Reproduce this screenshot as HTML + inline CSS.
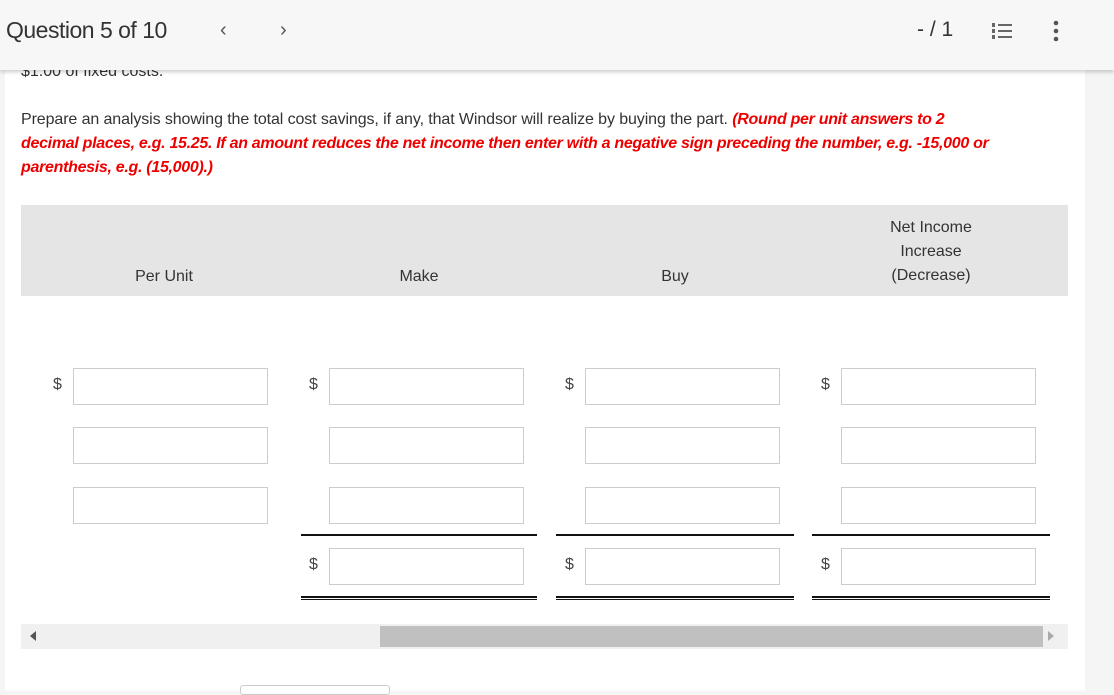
<!DOCTYPE html>
<html><head><style>
*{margin:0;padding:0;box-sizing:border-box}
body{width:1114px;height:691px;overflow:hidden;background:#f5f5f5;font-family:"Liberation Sans",sans-serif;color:#333;position:relative}
.content{position:absolute;left:5px;top:0;width:1080px;height:691px;background:#fff}
.hdr{position:absolute;left:0;top:0;width:1114px;height:70px;background:#f7f7f7;box-shadow:0 2px 4px rgba(0,0,0,.2);z-index:2}
.a{position:absolute}
.in{position:absolute;width:195px;height:37px;border:1px solid #ccc;background:#fff}
.d{position:absolute;font-size:16px;color:#444}
.l1{position:absolute;height:1px;border-top:2px solid #111}
.l2{position:absolute;height:4px;border-top:2px solid #111;border-bottom:1.5px solid #111}
.th{position:absolute;font-size:16px;color:#333;text-align:center;width:200px;line-height:24px}
.red{color:#e00;font-weight:bold;font-style:italic;letter-spacing:-0.3px}
</style></head><body>
<div class="content"></div>
<div class="hdr">
 <div class="a" style="left:6px;top:17px;font-size:23px;color:#333;letter-spacing:-0.5px">Question 5 of 10</div>
 <div class="a" style="left:220px;top:19px;font-size:20px;color:#555">&lsaquo;</div>
 <div class="a" style="left:280px;top:19px;font-size:20px;color:#555">&rsaquo;</div>
 <div class="a" style="left:917px;top:18px;font-size:21px;color:#333">- / 1</div>
 <svg class="a" style="left:990px;top:22px" width="24" height="20"><g stroke="#666" stroke-width="2"><line x1="8" y1="3" x2="22" y2="3"/><line x1="8" y1="9" x2="22" y2="9"/><line x1="8" y1="15" x2="22" y2="15"/></g><g fill="#666"><rect x="2" y="1" width="3" height="4"/><rect x="2" y="7" width="3" height="4"/><rect x="2" y="13" width="3" height="4"/></g></svg>
 <svg class="a" style="left:1052px;top:20px" width="8" height="24"><circle cx="4" cy="3" r="2.3" fill="#555"/><circle cx="4" cy="11" r="2.3" fill="#555"/><circle cx="4" cy="19" r="2.3" fill="#555"/></svg>
</div>
<div class="a" style="left:21px;top:63px;font-size:16px;color:#333">$1.00 of fixed costs.</div>
<div class="a" style="left:21px;top:108px;width:1060px;font-size:16px;line-height:24px;color:#333;letter-spacing:-0.1px;white-space:nowrap">Prepare an analysis showing the total cost savings, if any, that Windsor will realize by buying the part. <span class="red">(Round per unit answers to 2</span><br><span class="red">decimal places, e.g. 15.25. If an amount reduces the net income then enter with a negative sign preceding the number, e.g. -15,000 or</span><br><span class="red">parenthesis, e.g. (15,000).)</span></div>
<div class="a" style="left:21px;top:205px;width:1047px;height:91px;background:#e5e5e5"></div>
<div class="th" style="left:64px;top:265px">Per Unit</div>
<div class="th" style="left:319px;top:265px">Make</div>
<div class="th" style="left:575px;top:265px">Buy</div>
<div class="th" style="left:831px;top:216px">Net Income<br>Increase<br>(Decrease)</div>

<div class="d" style="left:53px;top:376px">$</div><div class="in" style="left:73px;top:368px"></div>
<div class="d" style="left:309px;top:376px">$</div><div class="in" style="left:329px;top:368px"></div>
<div class="d" style="left:565px;top:376px">$</div><div class="in" style="left:585px;top:368px"></div>
<div class="d" style="left:821px;top:376px">$</div><div class="in" style="left:841px;top:368px"></div>

<div class="in" style="left:73px;top:427px"></div><div class="in" style="left:329px;top:427px"></div><div class="in" style="left:585px;top:427px"></div><div class="in" style="left:841px;top:427px"></div>
<div class="in" style="left:73px;top:487px"></div><div class="in" style="left:329px;top:487px"></div><div class="in" style="left:585px;top:487px"></div><div class="in" style="left:841px;top:487px"></div>

<div class="l1" style="left:301px;top:534px;width:236px"></div>
<div class="l1" style="left:556px;top:534px;width:238px"></div>
<div class="l1" style="left:812px;top:534px;width:238px"></div>

<div class="d" style="left:309px;top:556px">$</div><div class="in" style="left:329px;top:548px"></div>
<div class="d" style="left:565px;top:556px">$</div><div class="in" style="left:585px;top:548px"></div>
<div class="d" style="left:821px;top:556px">$</div><div class="in" style="left:841px;top:548px"></div>

<div class="l2" style="left:301px;top:596px;width:236px"></div>
<div class="l2" style="left:556px;top:596px;width:238px"></div>
<div class="l2" style="left:812px;top:596px;width:238px"></div>

<div class="a" style="left:21px;top:624px;width:1047px;height:25px;background:#f0f0f0"></div>
<div class="a" style="left:380px;top:626px;width:663px;height:21px;background:#c0c0c0"></div>
<div class="a" style="left:30px;top:631px;width:0;height:0;border-top:5px solid transparent;border-bottom:5px solid transparent;border-right:6px solid #555"></div>
<div class="a" style="left:1048px;top:631px;width:0;height:0;border-top:5px solid transparent;border-bottom:5px solid transparent;border-left:6px solid #aaa"></div>
<div class="a" style="left:240px;top:685px;width:150px;height:10px;border:1px solid #ccc;border-radius:3px;background:#fff"></div>
</body></html>
